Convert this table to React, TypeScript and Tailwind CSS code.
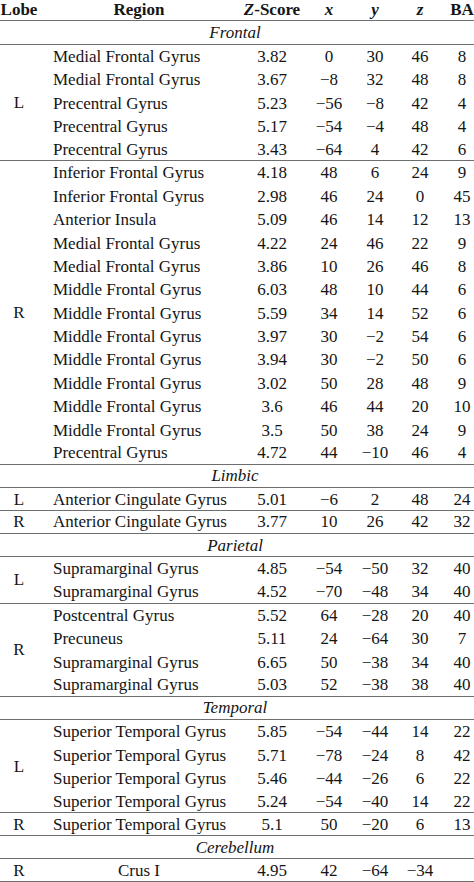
const font = { fontFamily: '"Liberation Serif", "Times New Roman", serif' }

type Row = [string, string, string, string, string, string]
type Group = { lobe: string; rows: Row[] }
type Section = { name: string; groups: Group[] }

const sections: Section[] = [
  {
    name: 'Frontal',
    groups: [
      {
        lobe: 'L',
        rows: [
          ['Medial Frontal Gyrus', '3.82', '0', '30', '46', '8'],
          ['Medial Frontal Gyrus', '3.67', '−8', '32', '48', '8'],
          ['Precentral Gyrus', '5.23', '−56', '−8', '42', '4'],
          ['Precentral Gyrus', '5.17', '−54', '−4', '48', '4'],
          ['Precentral Gyrus', '3.43', '−64', '4', '42', '6'],
        ],
      },
      {
        lobe: 'R',
        rows: [
          ['Inferior Frontal Gyrus', '4.18', '48', '6', '24', '9'],
          ['Inferior Frontal Gyrus', '2.98', '46', '24', '0', '45'],
          ['Anterior Insula', '5.09', '46', '14', '12', '13'],
          ['Medial Frontal Gyrus', '4.22', '24', '46', '22', '9'],
          ['Medial Frontal Gyrus', '3.86', '10', '26', '46', '8'],
          ['Middle Frontal Gyrus', '6.03', '48', '10', '44', '6'],
          ['Middle Frontal Gyrus', '5.59', '34', '14', '52', '6'],
          ['Middle Frontal Gyrus', '3.97', '30', '−2', '54', '6'],
          ['Middle Frontal Gyrus', '3.94', '30', '−2', '50', '6'],
          ['Middle Frontal Gyrus', '3.02', '50', '28', '48', '9'],
          ['Middle Frontal Gyrus', '3.6', '46', '44', '20', '10'],
          ['Middle Frontal Gyrus', '3.5', '50', '38', '24', '9'],
          ['Precentral Gyrus', '4.72', '44', '−10', '46', '4'],
        ],
      },
    ],
  },
  {
    name: 'Limbic',
    groups: [
      { lobe: 'L', rows: [['Anterior Cingulate Gyrus', '5.01', '−6', '2', '48', '24']] },
      { lobe: 'R', rows: [['Anterior Cingulate Gyrus', '3.77', '10', '26', '42', '32']] },
    ],
  },
  {
    name: 'Parietal',
    groups: [
      {
        lobe: 'L',
        rows: [
          ['Supramarginal Gyrus', '4.85', '−54', '−50', '32', '40'],
          ['Supramarginal Gyrus', '4.52', '−70', '−48', '34', '40'],
        ],
      },
      {
        lobe: 'R',
        rows: [
          ['Postcentral Gyrus', '5.52', '64', '−28', '20', '40'],
          ['Precuneus', '5.11', '24', '−64', '30', '7'],
          ['Supramarginal Gyrus', '6.65', '50', '−38', '34', '40'],
          ['Supramarginal Gyrus', '5.03', '52', '−38', '38', '40'],
        ],
      },
    ],
  },
  {
    name: 'Temporal',
    groups: [
      {
        lobe: 'L',
        rows: [
          ['Superior Temporal Gyrus', '5.85', '−54', '−44', '14', '22'],
          ['Superior Temporal Gyrus', '5.71', '−78', '−24', '8', '42'],
          ['Superior Temporal Gyrus', '5.46', '−44', '−26', '6', '22'],
          ['Superior Temporal Gyrus', '5.24', '−54', '−40', '14', '22'],
        ],
      },
      { lobe: 'R', rows: [['Superior Temporal Gyrus', '5.1', '50', '−20', '6', '13']] },
    ],
  },
  {
    name: 'Cerebellum',
    groups: [{ lobe: 'R', rows: [['Crus I', '4.95', '42', '−64', '−34', '']] }],
  },
]

function DataRow({ row, centered }: { row: Row; centered: boolean }) {
  const [region, zs, x, y, z, ba] = row
  return (
    <div className="flex h-[23.4px] items-center last:h-[21.9px]">
      <div className={centered ? 'w-[202px] text-center' : 'w-[202px] pl-[15px]'}>{region}</div>
      <div className="w-[64px] text-center">{zs}</div>
      <div className="w-[50px] text-center">{x}</div>
      <div className="w-[42px] text-center">{y}</div>
      <div className="w-[48px] text-center">{z}</div>
      <div className="w-[36px] text-center">{ba}</div>
    </div>
  )
}

export default function App() {
  return (
    <div className="w-full overflow-hidden bg-white">
      <div className="w-[480px] text-[17px] leading-none text-[#151515]" style={font}>
        <div className="flex h-[21.3px] items-center border-b-[1.5px] border-[#6e6e6e] pb-[2px] font-bold">
          <div className="w-[38px] text-center">Lobe</div>
          <div className="w-[202px] text-center">Region</div>
          <div className="w-[64px] text-center">
            <i>Z</i>-Score
          </div>
          <div className="w-[50px] text-center italic">x</div>
          <div className="w-[42px] text-center italic">y</div>
          <div className="w-[48px] text-center italic">z</div>
          <div className="w-[36px] text-center">BA</div>
        </div>
        {sections.map((s) => (
          <div key={s.name}>
            <div className="flex h-[23.4px] items-center justify-center border-b-[1.5px] border-[#6e6e6e] pr-[10px] italic">
              {s.name}
            </div>
            {s.groups.map((g, i) => (
              <div key={i} className="flex border-b-[1.5px] border-[#6e6e6e]">
                <div className="flex w-[38px] items-center justify-center">{g.lobe}</div>
                <div className="flex flex-col">
                  {g.rows.map((r, j) => (
                    <DataRow key={j} row={r} centered={s.name === 'Cerebellum'} />
                  ))}
                </div>
              </div>
            ))}
          </div>
        ))}
      </div>
    </div>
  )
}
